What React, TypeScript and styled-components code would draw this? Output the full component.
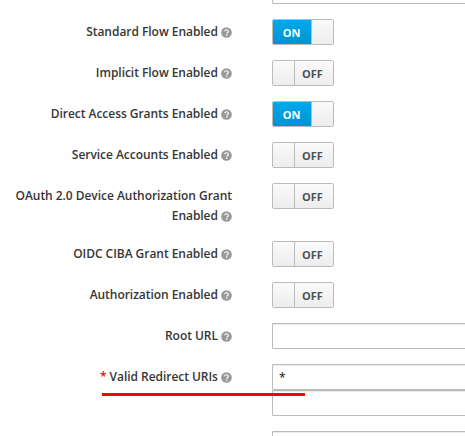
import React from "react";
import styled, { createGlobalStyle } from "styled-components";

const GlobalStyle = createGlobalStyle`
  html, body {
    margin: 0;
    height: 100%;
    overflow: hidden;
    background: #fff;
    font-family: "Open Sans", "Liberation Sans", sans-serif;
    font-size: 12px;
    color: #363636;
  }
`;

const HelpIcon = () => (
  <HelpSvg viewBox="0 0 12 12" aria-hidden="true">
    <circle cx="6" cy="6" r="5.8" fill="#999" />
    <path
      d="M4.1 4.7c0-1.1.9-1.7 1.9-1.7s2 .6 2 1.6c0 1.4-1.6 1.3-1.7 2.6"
      fill="none"
      stroke="#fff"
      strokeWidth="1.3"
    />
    <rect x="5.5" y="8" width="1.5" height="1.5" fill="#fff" />
  </HelpSvg>
);

type ToggleProps = { on?: boolean };

const Toggle = ({ on }: ToggleProps) =>
  on ? (
    <Switch>
      <OnPart>ON</OnPart>
      <Knob $divider="left" />
    </Switch>
  ) : (
    <Switch>
      <Knob $divider="right" />
      <OffPart>OFF</OffPart>
    </Switch>
  );

const rows = [
  { label: "Standard Flow Enabled", on: true },
  { label: "Implicit Flow Enabled" },
  { label: "Direct Access Grants Enabled", on: true },
  { label: "Service Accounts Enabled" },
  { label: "OAuth 2.0 Device Authorization Grant Enabled" },
  { label: "OIDC CIBA Grant Enabled" },
  { label: "Authorization Enabled" },
];

export default function App() {
  return (
    <Page>
      <GlobalStyle />
      <Form>
        <Row>
          <span />
          <TextInput />
        </Row>
        {rows.map((row) => (
          <Row key={row.label}>
            <Label>
              {row.label} <HelpIcon />
            </Label>
            <Toggle on={row.on} />
          </Row>
        ))}
        <Row>
          <Label>
            Root URL <HelpIcon />
          </Label>
          <TextInput />
        </Row>
        <Row>
          <Label>
            <Required>*</Required> Valid Redirect URIs <HelpIcon />
          </Label>
          <InputStack>
            <TextInput defaultValue="*" />
            <TextInput />
          </InputStack>
        </Row>
        <Row>
          <span />
          <TextInput />
        </Row>
      </Form>
      <RedLine />
    </Page>
  );
}

const Page = styled.div`
  position: relative;
  width: 465px;
  height: 436px;
  overflow: hidden;
`;

const Form = styled.div`
  display: flex;
  flex-direction: column;
  gap: 15px;
  margin-top: -22px;
`;

const Row = styled.div`
  display: grid;
  grid-template-columns: 232px 400px;
  column-gap: 40px;
  align-items: start;
`;

const Label = styled.label`
  text-align: right;
  font-weight: 600;
  letter-spacing: -0.04px;
  line-height: 20px;
  padding-top: 3px;
`;

const HelpSvg = styled.svg`
  width: 11px;
  height: 11px;
  vertical-align: -1.5px;
`;

const Required = styled.span`
  color: #f00;
`;

const Switch = styled.div`
  display: flex;
  width: 62px;
  height: 26px;
  box-sizing: border-box;
  border: 1px solid #bbb;
  border-radius: 2px;
  overflow: hidden;
  font-weight: 700;
  font-size: 11px;
`;

const OnPart = styled.div`
  width: 38px;
  box-sizing: border-box;
  padding-right: 1px;
  display: flex;
  align-items: center;
  justify-content: center;
  color: #fff;
  background: linear-gradient(#00a9ec, #0093d0);
`;

const OffPart = styled.div`
  flex: 1;
  padding-right: 3px;
  display: flex;
  align-items: center;
  justify-content: center;
  color: #4d5258;
  background: linear-gradient(#fafafa, #ededed);
`;

const Knob = styled.div<{ $divider: "left" | "right" }>`
  flex: 1;
  max-width: ${(p) => (p.$divider === "right" ? "22px" : "none")};
  box-sizing: border-box;
  background: linear-gradient(#fafafa, #ededed);
  border-${(p) => p.$divider}: 1px solid #bbb;
`;

const InputStack = styled.div`
  display: flex;
  flex-direction: column;
`;

const TextInput = styled.input`
  display: block;
  width: 100%;
  min-width: 0;
  height: 26px;
  box-sizing: border-box;
  border: 1px solid #bbb;
  border-radius: 1px;
  outline: none;
  padding: 2px 6px;
  font: inherit;
  font-weight: 600;
  color: #363636;
  background: #fff;
  box-shadow: inset 0 1px 1px rgba(3, 3, 3, 0.08);
`;

const RedLine = styled.div`
  position: absolute;
  left: 102px;
  top: 393px;
  width: 203px;
  height: 3px;
  background: #f00;
`;
